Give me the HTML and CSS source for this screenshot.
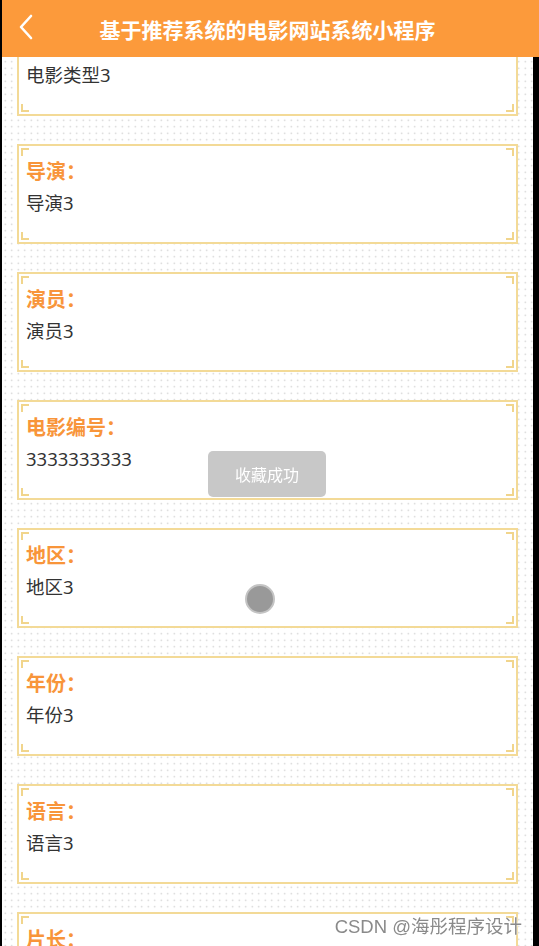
FILE: index.html
```html
<!DOCTYPE html>
<html lang="zh-CN">
<head>
<meta charset="utf-8">
<title>基于推荐系统的电影网站系统小程序</title>
<link rel="stylesheet" href="styles.css">
</head>
<body>
<header class="nav">
  <svg class="back" width="16" height="26" viewBox="0 0 16 26"><path d="M13 2 L3 13 L13 24" fill="none" stroke="#fff" stroke-width="2.6" stroke-linecap="round" stroke-linejoin="round"/></svg>
  <h1 class="title">基于推荐系统的电影网站系统小程序</h1>
</header>
<main class="page">
  <section class="card"><i class="c tl"></i><i class="c tr"></i><i class="c bl"></i><i class="c br"></i><div class="label">电影类型：</div><div class="value">电影类型3</div></section>
  <section class="card"><i class="c tl"></i><i class="c tr"></i><i class="c bl"></i><i class="c br"></i><div class="label">导演：</div><div class="value">导演3</div></section>
  <section class="card"><i class="c tl"></i><i class="c tr"></i><i class="c bl"></i><i class="c br"></i><div class="label">演员：</div><div class="value">演员3</div></section>
  <section class="card"><i class="c tl"></i><i class="c tr"></i><i class="c bl"></i><i class="c br"></i><div class="label">电影编号：</div><div class="value">3333333333</div></section>
  <section class="card"><i class="c tl"></i><i class="c tr"></i><i class="c bl"></i><i class="c br"></i><div class="label">地区：</div><div class="value">地区3</div></section>
  <section class="card"><i class="c tl"></i><i class="c tr"></i><i class="c bl"></i><i class="c br"></i><div class="label">年份：</div><div class="value">年份3</div></section>
  <section class="card"><i class="c tl"></i><i class="c tr"></i><i class="c bl"></i><i class="c br"></i><div class="label">语言：</div><div class="value">语言3</div></section>
  <section class="card"><i class="c tl"></i><i class="c tr"></i><i class="c bl"></i><i class="c br"></i><div class="label">片长：</div><div class="value">120</div></section>
</main>
<div class="toast">收藏成功</div>
<div class="touch"></div>
<div class="watermark">CSDN @海彤程序设计</div>
</body>
</html>
```
FILE: styles.css
```css
html, body {
  margin: 0;
  padding: 0;
  height: 946px;
  overflow: hidden;
  background: #000;
}
body {
  font-family: "Noto Sans", "Noto Sans CJK SC", sans-serif;
}
.nav {
  position: fixed;
  top: 0;
  left: 2px;
  right: 0;
  height: 57px;
  background: #fc9a3b;
  display: flex;
  align-items: center;
  justify-content: center;
  padding-right: 6px;
  z-index: 5;
}
.back {
  position: absolute;
  left: 16px;
  top: 14px;
}
.title {
  margin: 0;
  color: #fff;
  font-size: 21px;
  font-weight: bold;
  font-family: "Noto Sans CJK SC", sans-serif;
  letter-spacing: 0;
}
.page {
  margin: 0 6px 0 2px;
  padding: 16px 15px 40px;
  display: flex;
  flex-direction: column;
  gap: 28px;
  background-color: #fff;
  background-image: radial-gradient(circle, #cccccc 0.7px, transparent 1px);
  background-size: 6.5px 6.5px;
  min-height: 1200px;
}
.card {
  position: relative;
  height: 100px;
  box-sizing: border-box;
  border: 2px solid #f3da97;
  background: #fff;
  padding: 11px 7px 0;
}
.label {
  color: #f8953a;
  font-size: 20px;
  font-weight: bold;
  line-height: 28px;
  font-family: "Noto Sans CJK SC", sans-serif;
}
.value {
  color: #333;
  font-size: 18.5px;
  line-height: 36px;
}
.c {
  position: absolute;
  width: 6px;
  height: 6px;
  border-color: #f1d58c;
  border-style: solid;
  border-width: 0;
}
.tl { top: 2px; left: 2px; border-top-width: 2px; border-left-width: 2px; }
.tr { top: 2px; right: 2px; border-top-width: 2px; border-right-width: 2px; }
.bl { bottom: 2px; left: 2px; border-bottom-width: 2px; border-left-width: 2px; }
.br { bottom: 2px; right: 2px; border-bottom-width: 2px; border-right-width: 2px; }
.toast {
  position: fixed;
  left: 208px;
  top: 451px;
  width: 118px;
  height: 46px;
  border-radius: 5px;
  background: rgba(190, 190, 190, 0.85);
  color: #fff;
  font-size: 16px;
  font-family: "Noto Sans CJK SC", sans-serif;
  display: flex;
  align-items: center;
  justify-content: center;
  z-index: 6;
}
.touch {
  position: fixed;
  left: 245px;
  top: 584px;
  width: 26px;
  height: 26px;
  border-radius: 50%;
  background: #999;
  border: 2px solid #c4c4c4;
  z-index: 6;
}
.watermark {
  position: fixed;
  right: 17px;
  bottom: 8px;
  font-size: 18.5px;
  color: #8a8a8a;
  font-family: "Liberation Sans", "Noto Sans CJK SC", sans-serif;
  text-shadow: 0 0 2px #fff, 0 0 2px #fff;
  z-index: 7;
}
```
